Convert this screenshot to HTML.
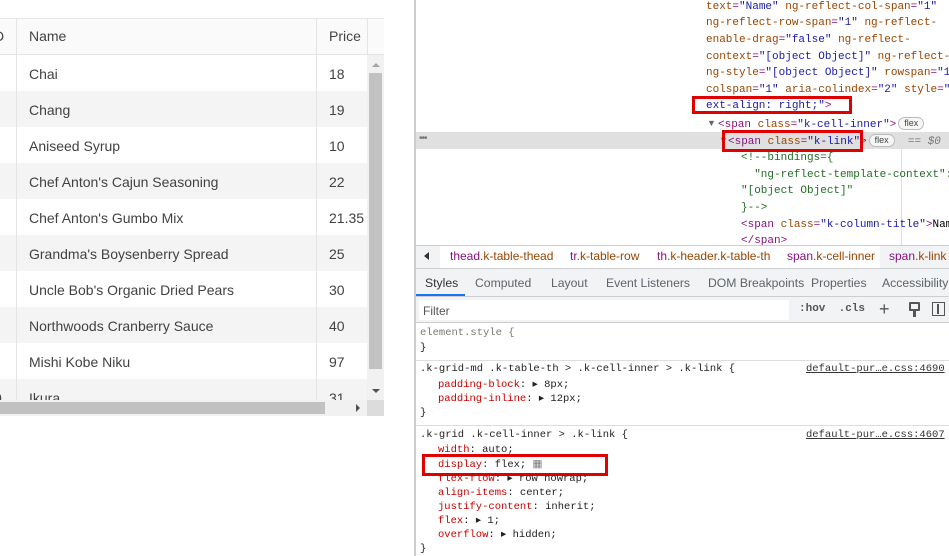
<!DOCTYPE html>
<html><head><meta charset="utf-8"><style>
*{margin:0;padding:0;box-sizing:border-box}
body{width:949px;height:556px;position:relative;overflow:hidden;background:#fff;font-family:"Liberation Sans",Arial,sans-serif}
.a{position:absolute;white-space:pre}
.g{color:#424242;font-size:14px}
.m{font-family:"Liberation Mono",monospace;font-size:11px;line-height:14px}
.s{font-family:"Liberation Mono",monospace;font-size:10.5px;line-height:14px;color:#222}
.t{color:#881280}.n{color:#994500}.v{color:#1a1aa6}.c{color:#236e25}.p{color:#c80000}
.box{position:absolute;border:3px solid #e00000}
.pill{display:inline-block;border:1px solid #bbb;border-radius:8px;font-size:9px;line-height:11px;padding:0 5px;color:#444;font-family:"Liberation Sans",sans-serif;vertical-align:1px;background:#f6f6f6;margin-left:2px}
.tri{position:absolute;color:#666;font-size:9px;font-family:"Liberation Sans",sans-serif}
.bc{position:absolute;top:249px;font-size:12px;white-space:pre}
.tab{position:absolute;top:276px;font-size:12.2px;color:#5f6368;white-space:pre}
</style></head><body>
<!-- grid -->
<div class="a" style="left:0;top:18px;width:384px;height:398px;border:1px solid #e6e6e6;border-left:none;background:#fff"></div>
<div class="a" style="left:0;top:19px;width:384px;height:36px;background:#fafafa;border-bottom:1px solid #e4e4e4"></div>
<div class="a" style="left:0;top:91px;width:367px;height:36px;background:#f4f4f4"></div>
<div class="a" style="left:0;top:163px;width:367px;height:36px;background:#f4f4f4"></div>
<div class="a" style="left:0;top:235px;width:367px;height:36px;background:#f4f4f4"></div>
<div class="a" style="left:0;top:307px;width:367px;height:36px;background:#f4f4f4"></div>
<div class="a" style="left:0;top:379px;width:367px;height:21px;background:#f4f4f4"></div>
<div class="a" style="left:16px;top:19px;width:1px;height:381px;background:#e4e4e4"></div>
<div class="a" style="left:316px;top:19px;width:1px;height:381px;background:#e4e4e4"></div>
<div class="a" style="left:367px;top:19px;width:1px;height:36px;background:#e4e4e4"></div>
<div class="a g" style="left:-6px;top:28px">D</div>
<div class="a g" style="left:29px;top:28px">Name</div>
<div class="a g" style="left:329px;top:28px">Price</div>
<div class="a g" style="left:29px;top:66px">Chai</div><div class="a g" style="left:329px;top:66px">18</div>
<div class="a g" style="left:29px;top:102px">Chang</div><div class="a g" style="left:329px;top:102px">19</div>
<div class="a g" style="left:29px;top:138px">Aniseed Syrup</div><div class="a g" style="left:329px;top:138px">10</div>
<div class="a g" style="left:29px;top:174px">Chef Anton's Cajun Seasoning</div><div class="a g" style="left:329px;top:174px">22</div>
<div class="a g" style="left:29px;top:210px">Chef Anton's Gumbo Mix</div><div class="a g" style="left:329px;top:210px">21.35</div>
<div class="a g" style="left:29px;top:246px">Grandma's Boysenberry Spread</div><div class="a g" style="left:329px;top:246px">25</div>
<div class="a g" style="left:29px;top:282px">Uncle Bob's Organic Dried Pears</div><div class="a g" style="left:329px;top:282px">30</div>
<div class="a g" style="left:29px;top:318px">Northwoods Cranberry Sauce</div><div class="a g" style="left:329px;top:318px">40</div>
<div class="a g" style="left:29px;top:354px">Mishi Kobe Niku</div><div class="a g" style="left:329px;top:354px">97</div>
<div class="a" style="left:0;top:379px;width:367px;height:21px;overflow:hidden"><div class="a g" style="left:-6px;top:11px">0</div><div class="a g" style="left:29px;top:11px">Ikura</div><div class="a g" style="left:329px;top:11px">31</div></div>
<!-- scrollbars -->
<div class="a" style="left:367px;top:55px;width:17px;height:345px;background:#f1f1f1"></div>
<div class="a" style="left:369px;top:73px;width:13px;height:296px;background:#c1c1c1"></div>
<div class="a" style="left:372px;top:63px;border-left:4px solid transparent;border-right:4px solid transparent;border-bottom:4px solid #a3a3a3"></div>
<div class="a" style="left:372px;top:389px;border-left:4px solid transparent;border-right:4px solid transparent;border-top:4px solid #505050"></div>
<div class="a" style="left:0;top:400px;width:367px;height:16px;background:#f1f1f1"></div>
<div class="a" style="left:0;top:402px;width:325px;height:12px;background:#c1c1c1"></div>
<div class="a" style="left:356px;top:404px;border-top:4px solid transparent;border-bottom:4px solid transparent;border-left:4px solid #505050"></div>
<div class="a" style="left:367px;top:400px;width:17px;height:16px;background:#dcdcdc"></div>
<!-- divider -->
<div class="a" style="left:414px;top:0;width:2px;height:556px;background:#cbcdd1"></div>
<!-- DOM tree -->
<div class="a" style="left:416px;top:132px;width:533px;height:17px;background:#e0e0e0"></div>
<div class="a" style="left:419px;top:133px;font-size:10px;color:#777;letter-spacing:-1px">•••</div>
<div class="a" style="left:901px;top:149px;width:1px;height:96px;background:#ddd"></div>
<div class="a m" style="left:706px;top:0px"><span class="n">text</span><span class="t">=</span><span class="v">"Name"</span> <span class="n">ng-reflect-col-span</span><span class="t">=</span><span class="v">"1"</span></div>
<div class="a m" style="left:706px;top:16px"><span class="n">ng-reflect-row-span</span><span class="t">=</span><span class="v">"1"</span> <span class="n">ng-reflect-</span></div>
<div class="a m" style="left:706px;top:33px"><span class="n">enable-drag</span><span class="t">=</span><span class="v">"false"</span> <span class="n">ng-reflect-</span></div>
<div class="a m" style="left:706px;top:50px"><span class="n">context</span><span class="t">=</span><span class="v">"[object Object]"</span> <span class="n">ng-reflect-</span></div>
<div class="a m" style="left:706px;top:66px"><span class="n">ng-style</span><span class="t">=</span><span class="v">"[object Object]"</span> <span class="n">rowspan</span><span class="t">=</span><span class="v">"1</span></div>
<div class="a m" style="left:706px;top:83px"><span class="n">colspan</span><span class="t">=</span><span class="v">"1"</span> <span class="n">aria-colindex</span><span class="t">=</span><span class="v">"2"</span> <span class="n">style</span><span class="t">=</span><span class="v">"</span></div>
<div class="a m" style="left:706px;top:99px"><span class="v">ext-align: right;"</span><span class="t">&gt;</span></div>
<div class="box" style="left:692px;top:96px;width:160px;height:18px"></div>
<div class="tri" style="left:707px;top:118px">▼</div>
<div class="a m" style="left:718px;top:117px"><span class="t">&lt;span</span> <span class="n">class</span><span class="t">=</span><span class="v">"k-cell-inner"</span><span class="t">&gt;</span><span class="pill">flex</span></div>
<div class="tri" style="left:719px;top:135px">▼</div>
<div class="a m" style="left:728px;top:134px"><span class="t">&lt;span</span> <span class="n">class</span><span class="t">=</span><span class="v">"k-link"</span><span class="t">&gt;</span><span class="pill">flex</span> <span style="color:#777"> == <i>$0</i></span></div>
<div class="box" style="left:722px;top:130px;width:141px;height:22px"></div>
<div class="a m c" style="left:741px;top:151px">&lt;!--bindings={</div>
<div class="a m c" style="left:741px;top:168px">  "ng-reflect-template-context":</div>
<div class="a m c" style="left:741px;top:184px">"[object Object]"</div>
<div class="a m c" style="left:741px;top:201px">}--&gt;</div>
<div class="a m" style="left:741px;top:218px"><span class="t">&lt;span</span> <span class="n">class</span><span class="t">=</span><span class="v">"k-column-title"</span><span class="t">&gt;</span>Name</div>
<div class="a m t" style="left:741px;top:234px">&lt;/span&gt;</div>
<!-- breadcrumbs -->
<div class="a" style="left:416px;top:245px;width:533px;height:24px;background:#fff;border-top:1px solid #cbcdd1;border-bottom:1px solid #cbcdd1"></div>
<div class="a" style="left:416px;top:246px;width:24px;height:22px;background:#f1f3f4"></div>
<div class="a" style="left:880px;top:246px;width:69px;height:22px;background:#f1f3f4"></div>
<div class="a" style="left:424px;top:252px;border-top:4px solid transparent;border-bottom:4px solid transparent;border-right:5px solid #333"></div>
<div class="bc" style="left:450px"><span class="t">thead</span><span class="n">.k-table-thead</span></div>
<div class="bc" style="left:570px"><span class="t">tr</span><span class="n">.k-table-row</span></div>
<div class="bc" style="left:657px"><span class="t">th</span><span class="n">.k-header.k-table-th</span></div>
<div class="bc" style="left:787px"><span class="t">span</span><span class="n">.k-cell-inner</span></div>
<div class="bc" style="left:889px"><span class="t">span</span><span class="n">.k-link</span></div>
<!-- tabs -->
<div class="a" style="left:416px;top:269px;width:533px;height:28px;background:#f1f3f4;border-bottom:1px solid #cbcdd1"></div>
<div class="a" style="left:416px;top:294px;width:49px;height:2px;background:#1a73e8"></div>
<div class="tab" style="left:425px;color:#333">Styles</div>
<div class="tab" style="left:475px">Computed</div>
<div class="tab" style="left:551px">Layout</div>
<div class="tab" style="left:606px">Event Listeners</div>
<div class="tab" style="left:708px">DOM Breakpoints</div>
<div class="tab" style="left:811px">Properties</div>
<div class="tab" style="left:882px">Accessibility</div>
<!-- filter -->
<div class="a" style="left:416px;top:297px;width:533px;height:26px;background:#f1f3f4;border-bottom:1px solid #cbcdd1"></div>
<div class="a" style="left:419px;top:300px;width:370px;height:20px;background:#fff"></div>
<div class="a" style="left:423px;top:304px;font-size:12px;color:#555">Filter</div>
<div class="a" style="left:799px;top:303px;font-family:'Liberation Mono',monospace;font-size:11px;color:#555;font-weight:bold">:hov  .cls</div>
<div class="a" style="left:879px;top:299px;font-size:18px;color:#555">+</div>
<div class="a" style="left:909px;top:302px;width:11px;height:9px;border:2px solid #555;border-radius:1px"></div>
<div class="a" style="left:913px;top:311px;width:3px;height:6px;background:#555"></div>
<div class="a" style="left:932px;top:302px;width:13px;height:14px;border:1.5px solid #555"></div>
<div class="a" style="left:937px;top:304px;width:1.5px;height:10px;background:#555"></div>
<!-- styles -->
<div class="a s" style="left:420px;top:326px;color:#777">element.style {</div>
<div class="a s" style="left:420px;top:341px">}</div>
<div class="a" style="left:416px;top:360px;width:533px;height:1px;background:#ddd"></div>
<div class="a s" style="left:420px;top:362px">.k-grid-md .k-table-th &gt; .k-cell-inner &gt; .k-link {</div>
<div class="a s" style="left:806px;top:362px;text-decoration:underline;color:#333">default-pur…e.css:4690</div>
<div class="a s" style="left:438px;top:378px"><span class="p">padding-block</span>: ▸ 8px;</div>
<div class="a s" style="left:438px;top:392px"><span class="p">padding-inline</span>: ▸ 12px;</div>
<div class="a s" style="left:420px;top:406px">}</div>
<div class="a" style="left:416px;top:425px;width:533px;height:1px;background:#ddd"></div>
<div class="a s" style="left:420px;top:428px">.k-grid .k-cell-inner &gt; .k-link {</div>
<div class="a s" style="left:806px;top:428px;text-decoration:underline;color:#333">default-pur…e.css:4607</div>
<div class="a s" style="left:438px;top:443px"><span class="p">width</span>: auto;</div>
<div class="a s" style="left:438px;top:458px"><span class="p">display</span>: flex; <span style="color:#777;letter-spacing:-1px">▦</span></div>
<div class="box" style="left:422px;top:454px;width:186px;height:22px"></div>
<div class="a s" style="left:438px;top:472px"><span class="p">flex-flow</span>: ▸ row nowrap;</div>
<div class="a s" style="left:438px;top:486px"><span class="p">align-items</span>: center;</div>
<div class="a s" style="left:438px;top:500px"><span class="p">justify-content</span>: inherit;</div>
<div class="a s" style="left:438px;top:514px"><span class="p">flex</span>: ▸ 1;</div>
<div class="a s" style="left:438px;top:528px"><span class="p">overflow</span>: ▸ hidden;</div>
<div class="a s" style="left:420px;top:542px">}</div>
</body></html>
